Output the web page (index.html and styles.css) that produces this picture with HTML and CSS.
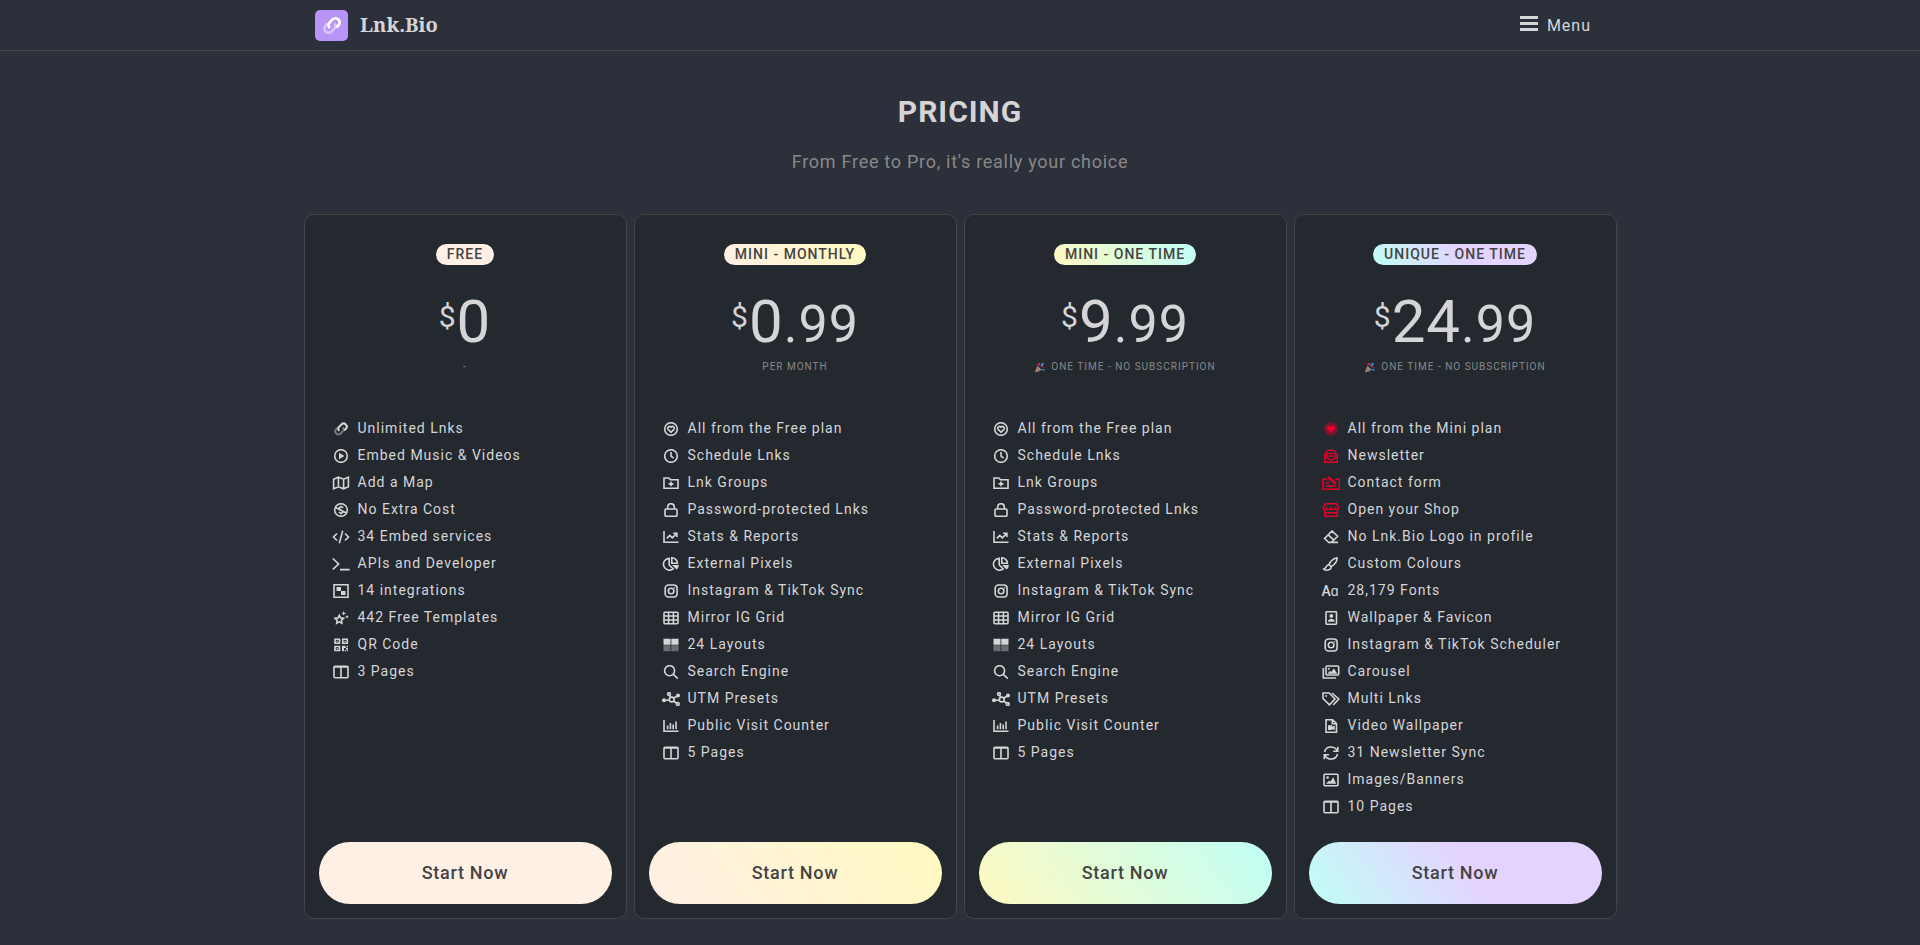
FILE: index.html
```
<!DOCTYPE html>
<html lang="en">
<head>
    <meta charset="UTF-8">
    <meta name="viewport" content="width=device-width, initial-scale=1.0">
    <title>Lnk.Bio - Pricing</title>
    <link rel="stylesheet" href="styles.css">
</head>
<body>
    <!-- Icon set -->
    <svg class="sprite" aria-hidden="true">
        <symbol id="i-link" viewBox="0 0 18 14"><path d="M10.700 5.100A3 3 0 0 1 10.800 9.300L8.600 11.500A3.100 3.100 0 0 1 4.200 7.100L5.800 5.500" stroke-width="2" opacity=".45"/><path d="M7.300 8.900A3 3 0 0 1 7.200 4.700L9.400 2.500A3.100 3.100 0 0 1 13.800 6.900L12.200 8.500" stroke-width="2"/></symbol>
        <symbol id="i-play" viewBox="0 0 18 14"><circle cx="9" cy="7" r="6.300"/><path class="fill" d="M7 3.800v6.400L12.400 7z"/></symbol>
        <symbol id="i-map" viewBox="0 0 18 14"><path d="m1.600 3.200 4.800-2 5.200 2 4.800-2v9.600l-4.800 2-5.200-2-4.800 2zM6.400 1.200v9.600M11.600 3.200v9.600"/></symbol>
        <symbol id="i-nocost" viewBox="0 0 18 14"><circle cx="9" cy="7" r="6.300"/><path d="m3.500 4.500 11 5.500M11.300 4.800c-1-1-4-1.100-4.300.4C6.700 7 11.400 6.800 11 8.900c-.3 1.500-3 1.300-4.200.3M9 2.700v1.200M9 10v1.400"/></symbol>
        <symbol id="i-code" viewBox="0 0 18 14"><path d="M5 3.500 1.500 7 5 10.500M13 3.500 16.500 7 13 10.500M10.700.8 7.300 13.200"/></symbol>
        <symbol id="i-terminal" viewBox="0 0 18 14"><path d="M.8 1.500 6.600 7 .8 12.300M8 12.600h9.700"/></symbol>
        <symbol id="i-integration" viewBox="0 0 18 14"><path d="M2 .7h14v12.600H2z"/><path class="fill" d="M4.500 3H9v4H4.500zM9 7h4.500v4H9z"/></symbol>
        <symbol id="i-stars" viewBox="0 0 18 14"><path d="m7.300 4.300 1.300 2.600 2.900.4-2.100 2 .5 2.900-2.600-1.400-2.600 1.400.5-2.900-2.100-2 2.900-.4z"/><path class="fill" d="m11.700 0 .7 1.700 1.700.7-1.700.7-.7 1.700-.7-1.700-1.700-.7 1.700-.7zM15 4l.6 1.200 1.300.6-1.300.6L15 7.600l-.6-1.200-1.300-.6 1.300-.6z"/></symbol>
        <symbol id="i-qr" viewBox="0 0 18 14"><path d="M3 1.200h4.500v4H3zM10.800 1.200h4.500v4h-4.500zM3 8.500h4.500v4H3z"/><path class="fill" d="M4.700 2.700h1.200v1.200H4.700zM12.500 2.700h1.200v1.200h-1.200zM4.700 10h1.200v1.200H4.700zM10 7.800h3l1 2h2v1.800h-2V10h-2v3.200h-2zM14.500 7.800H16V9h-1.500zM12.700 11.800h1.200v1.400h-1.200zM14.800 12H16v1.200h-1.200z"/></symbol>
        <symbol id="i-columns" viewBox="0 0 18 14"><rect x="2" y="1.200" width="14" height="11.600" rx="1"/><path d="M9 1.500v11M2 2h14"/></symbol>
        <symbol id="i-heart" viewBox="0 0 18 14"><circle cx="9" cy="7" r="6.300"/><path d="M9 10.300 6.100 7.400C4.700 5.500 7 3.300 9 5.300c2-2 4.300.2 2.900 2.100z"/></symbol>
        <symbol id="i-heart-solid" viewBox="0 0 18 14"><circle class="fill" cx="9" cy="7" r="7" opacity=".4"/><path class="fill" d="M9 11.300 5.400 7.600C3.200 5 6.500 1.900 9 4.500c2.500-2.600 5.800.5 3.600 3.100z"/></symbol>
        <symbol id="i-clock" viewBox="0 0 18 14"><circle cx="9" cy="7" r="6.300"/><path d="M9 3v4.200l2.600 1.900"/></symbol>
        <symbol id="i-folder" viewBox="0 0 18 14"><path d="M2 2h4.700l1.800 1.700H16v8.600H2zM9 5.500v4.800M6.600 7.900h4.800"/></symbol>
        <symbol id="i-lock" viewBox="0 0 18 14"><rect x="3" y="6" width="12" height="7.300" rx="1"/><path d="M5.700 6V4a3.300 3.300 0 0 1 6.600 0v2"/></symbol>
        <symbol id="i-stats" viewBox="0 0 18 14"><path d="M2 1v11.300h14.500M4.800 8.400l3-3 2.500 2.500 4-4M11.200 3.200h3.700v3.700"/></symbol>
        <symbol id="i-pie" viewBox="0 0 18 14"><path d="M7.200 1.200a6 6 0 1 0 4 10.700L7.200 8zM9.800.8v5.500h5.600A5.700 5.700 0 0 0 9.800.8z"/><path class="fill" d="M10 8h7a7 7 0 0 1-2.400 4.600z"/></symbol>
        <symbol id="i-instagram" viewBox="0 0 18 14"><rect x="3.200" y="1" width="11.900" height="12" rx="3.300"/><circle cx="9.100" cy="7" r="2.800"/><circle class="fill" cx="12.500" cy="3.700" r=".8"/></symbol>
        <symbol id="i-grid" viewBox="0 0 18 14"><rect x="2" y="1.200" width="14" height="11.600" rx="1"/><path d="M6.600 1.200v11.600M11.400 1.200v11.600M2 5h14M2 9h14"/></symbol>
        <symbol id="i-layout" viewBox="0 0 18 14"><path class="fill" d="M1.500.7h7v6h-7zM9.300.7h7.200v6H9.300z"/><path class="fill" opacity=".4" d="M1.500 7.300h7v6h-7zM9.300 7.300h7.200v6H9.300z"/></symbol>
        <symbol id="i-search" viewBox="0 0 18 14"><circle cx="7.600" cy="5.700" r="5"/><path d="m11.300 9.300 4.500 4.300"/></symbol>
        <symbol id="i-nodes" viewBox="0 0 18 14"><circle cx="9.700" cy="7.500" r="2.400"/><path d="m8.500 5.300-1-2.300M2 8.200h5.200M11.600 6.300 15.300 4M11.500 9l3.500 2.500"/><circle class="fill" cx="2" cy="8.200" r="2"/><circle cx="7" cy="2" r="1.400"/><circle class="fill" cx="16" cy="3.500" r="2"/><circle cx="15.800" cy="12" r="1.400"/></symbol>
        <symbol id="i-chart" viewBox="0 0 18 14"><path d="M2 1v11.300h14.500M5.600 10.200V6.500M8.400 10.200V4M11.200 10.200V5.500M14 10.200V2.500"/></symbol>
        <symbol id="i-newsletter" viewBox="0 0 18 14"><path d="M2.700 5.500v7.800h12.600V5.500M2.400 7.600 9 11.300l6.600-3.700M4.700 8V2.200L9 .7l4.300 1.500V8M2.500 6 4.700 3.800M15.500 6l-2.200-2.200M6.500 4.500h5M6.500 7h5" stroke-width="1.400"/></symbol>
        <symbol id="i-form" viewBox="0 0 18 14"><path d="M4.500 3.200H.9v10h16.500v-10h-4M3.600 6.800h3.600M3.600 10h10.800"/><path d="m6 1.200 7.800 6.200" stroke-width="2.600"/></symbol>
        <symbol id="i-shop" viewBox="0 0 18 14"><path d="M3.500.8h11l2.300 3.700c0 2.500-3 2.500-3.900.6-.8 1.800-3.200 1.800-3.900 0-.8 1.800-3.200 1.800-4 0-.9 1.900-3.800 1.900-3.800-.6zM2.800 6.500v6.700h12.400V6.500M3 9.800h12" stroke-width="1.500"/></symbol>
        <symbol id="i-eraser" viewBox="0 0 18 14"><path d="M6.500 12.300 2.600 8.500 10 1l5.600 5.200-6 6.100zM6.300 4.800l5.500 5.300M6 12.400h10"/></symbol>
        <symbol id="i-brush" viewBox="0 0 18 14"><path d="M6.800 7.700C8.200 4.500 11.500 1.700 15 .8c.3 3-2.500 6.700-5.700 8.900M6.800 7.700c-3.200.2-2.200 3.500-5 4.400 1.500 1.600 7.200 1.800 7.500-2.400zM6.800 7.700l2.500 2"/></symbol>
        <symbol id="i-portrait" viewBox="0 0 18 14"><rect x="4" y=".7" width="10.500" height="12.600" rx="1"/><circle class="fill" cx="9.300" cy="4.900" r="1.900"/><path class="fill" d="M5.900 10.800c0-4 6.800-4 6.800 0z"/></symbol>
        <symbol id="i-carousel" viewBox="0 0 18 14"><rect x="4" y="1" width="12.700" height="9" rx="1"/><path d="M1.300 3v10h12.800"/><path class="fill" d="m5.500 8.700 2.300-3 1.300 1.200 2.800-3.400 3.400 5.200z"/><circle class="fill" cx="6.800" cy="3.700" r="1"/></symbol>
        <symbol id="i-tags" viewBox="0 0 18 14"><path d="M1 1h6.200L13 7l-5.600 5.800L1 6.500zM10 1l6.800 6-5.600 6"/><circle class="fill" cx="4.200" cy="4" r="1"/></symbol>
        <symbol id="i-video" viewBox="0 0 18 14"><path d="M4 .7h6.500l4 3.800v8.800H4zM10.300.8v4h4"/><path class="fill" d="M6 6.200h4.200v1.600l2.500-1.200v4.600l-2.500-1.200v1H6z"/></symbol>
        <symbol id="i-sync" viewBox="0 0 18 14"><path d="M2.600 6C3.700.3 11.500-1 15.300 4.500M15.800.7v4.500h-4.600M15.500 8C14.400 13.700 6.600 15 2.800 9.500M2.300 13.300V8.800h4.600"/></symbol>
        <symbol id="i-image" viewBox="0 0 18 14"><rect x="2" y="1.200" width="14" height="11.600" rx="1"/><path class="fill" d="M4 10.800 7 7.500l1.300 1.200 2.900-4.400 3 6.500z"/><circle class="fill" cx="5.600" cy="4.500" r="1.300"/></symbol>
        <symbol id="i-party" viewBox="0 0 12 12"><path fill="#b09078" d="M1 11.500 3.700 4l4.500 4.400z"/><path fill="#8f7a78" d="m3.700 4 2.500 6-1.800.7-1.800-4z"/><path fill="#d31f5b" d="M4.500 1h2.300v2.800H4.500zM7.500 4.500l2-1.300.8 1.300-2 1.500z"/><path fill="#2492d1" d="M8.600 1h2v1.800l-2.400 2-1-1zM8.500 7.500l3 .5v1.500L8 9z"/><path fill="#b31f45" d="M3 2.200h1.400v1.300H3zM10 5.800h1.500v1.100H10z"/></symbol>
    </svg>

    <header class="topbar">
        <div class="topbar-inner">
            <a class="brand" href="#">
                <span class="brand-logo"><svg class="icon"><use href="#i-link"/></svg></span>
                <span class="brand-name">Lnk.Bio</span>
            </a>
            <button class="menu-btn" type="button"><span class="bars"></span>Menu</button>
        </div>
    </header>

    <main class="container">
        <h1>Pricing</h1>
        <p class="subtitle">From Free to Pro, it's really your choice</p>

        <div class="plans">
            <section class="card free">
                <h2 class="badge">Free</h2>
                <div class="price"><sup>$</sup>0</div>
                <p class="period">-</p>
                <ul class="features">
                    <li><svg class="icon"><use href="#i-link"/></svg>Unlimited Lnks</li>
                    <li><svg class="icon"><use href="#i-play"/></svg>Embed Music &amp; Videos</li>
                    <li><svg class="icon"><use href="#i-map"/></svg>Add a Map</li>
                    <li><svg class="icon"><use href="#i-nocost"/></svg>No Extra Cost</li>
                    <li><svg class="icon"><use href="#i-code"/></svg>34 Embed services</li>
                    <li><svg class="icon"><use href="#i-terminal"/></svg>APIs and Developer</li>
                    <li><svg class="icon"><use href="#i-integration"/></svg>14 integrations</li>
                    <li><svg class="icon"><use href="#i-stars"/></svg>442 Free Templates</li>
                    <li><svg class="icon"><use href="#i-qr"/></svg>QR Code</li>
                    <li><svg class="icon"><use href="#i-columns"/></svg>3 Pages</li>
                </ul>
                <a class="start" href="#">Start Now</a>
            </section>

            <section class="card monthly">
                <h2 class="badge">Mini - Monthly</h2>
                <div class="price"><sup>$</sup>0<small>.99</small></div>
                <p class="period">Per month</p>
                <ul class="features">
                    <li><svg class="icon"><use href="#i-heart"/></svg>All from the Free plan</li>
                    <li><svg class="icon"><use href="#i-clock"/></svg>Schedule Lnks</li>
                    <li><svg class="icon"><use href="#i-folder"/></svg>Lnk Groups</li>
                    <li><svg class="icon"><use href="#i-lock"/></svg>Password-protected Lnks</li>
                    <li><svg class="icon"><use href="#i-stats"/></svg>Stats &amp; Reports</li>
                    <li><svg class="icon"><use href="#i-pie"/></svg>External Pixels</li>
                    <li><svg class="icon"><use href="#i-instagram"/></svg>Instagram &amp; TikTok Sync</li>
                    <li><svg class="icon"><use href="#i-grid"/></svg>Mirror IG Grid</li>
                    <li><svg class="icon"><use href="#i-layout"/></svg>24 Layouts</li>
                    <li><svg class="icon"><use href="#i-search"/></svg>Search Engine</li>
                    <li><svg class="icon"><use href="#i-nodes"/></svg>UTM Presets</li>
                    <li><svg class="icon"><use href="#i-chart"/></svg>Public Visit Counter</li>
                    <li><svg class="icon"><use href="#i-columns"/></svg>5 Pages</li>
                </ul>
                <a class="start" href="#">Start Now</a>
            </section>

            <section class="card onetime">
                <h2 class="badge">Mini - One time</h2>
                <div class="price"><sup>$</sup>9<small>.99</small></div>
                <p class="period"><svg class="party"><use href="#i-party"/></svg>One time - No subscription</p>
                <ul class="features">
                    <li><svg class="icon"><use href="#i-heart"/></svg>All from the Free plan</li>
                    <li><svg class="icon"><use href="#i-clock"/></svg>Schedule Lnks</li>
                    <li><svg class="icon"><use href="#i-folder"/></svg>Lnk Groups</li>
                    <li><svg class="icon"><use href="#i-lock"/></svg>Password-protected Lnks</li>
                    <li><svg class="icon"><use href="#i-stats"/></svg>Stats &amp; Reports</li>
                    <li><svg class="icon"><use href="#i-pie"/></svg>External Pixels</li>
                    <li><svg class="icon"><use href="#i-instagram"/></svg>Instagram &amp; TikTok Sync</li>
                    <li><svg class="icon"><use href="#i-grid"/></svg>Mirror IG Grid</li>
                    <li><svg class="icon"><use href="#i-layout"/></svg>24 Layouts</li>
                    <li><svg class="icon"><use href="#i-search"/></svg>Search Engine</li>
                    <li><svg class="icon"><use href="#i-nodes"/></svg>UTM Presets</li>
                    <li><svg class="icon"><use href="#i-chart"/></svg>Public Visit Counter</li>
                    <li><svg class="icon"><use href="#i-columns"/></svg>5 Pages</li>
                </ul>
                <a class="start" href="#">Start Now</a>
            </section>

            <section class="card unique">
                <h2 class="badge">Unique - One time</h2>
                <div class="price"><sup>$</sup>24<small>.99</small></div>
                <p class="period"><svg class="party"><use href="#i-party"/></svg>One time - No subscription</p>
                <ul class="features">
                    <li><svg class="icon red"><use href="#i-heart-solid"/></svg>All from the Mini plan</li>
                    <li><svg class="icon red"><use href="#i-newsletter"/></svg>Newsletter</li>
                    <li><svg class="icon red"><use href="#i-form"/></svg>Contact form</li>
                    <li><svg class="icon red"><use href="#i-shop"/></svg>Open your Shop</li>
                    <li><svg class="icon"><use href="#i-eraser"/></svg>No Lnk.Bio Logo in profile</li>
                    <li><svg class="icon"><use href="#i-brush"/></svg>Custom Colours</li>
                    <li><span class="icon aa">Aɑ</span>28,179 Fonts</li>
                    <li><svg class="icon"><use href="#i-portrait"/></svg>Wallpaper &amp; Favicon</li>
                    <li><svg class="icon"><use href="#i-instagram"/></svg>Instagram &amp; TikTok Scheduler</li>
                    <li><svg class="icon"><use href="#i-carousel"/></svg>Carousel</li>
                    <li><svg class="icon"><use href="#i-tags"/></svg>Multi Lnks</li>
                    <li><svg class="icon"><use href="#i-video"/></svg>Video Wallpaper</li>
                    <li><svg class="icon"><use href="#i-sync"/></svg>31 Newsletter Sync</li>
                    <li><svg class="icon"><use href="#i-image"/></svg>Images/Banners</li>
                    <li><svg class="icon"><use href="#i-columns"/></svg>10 Pages</li>
                </ul>
                <a class="start" href="#">Start Now</a>
            </section>
        </div>
    </main>
</body>
</html>
```
FILE: styles.css
```
:root {
    --bg: #2c303a;
    --card-bg: #24282f;
    --border: #444;
    --text: #d5d5d7;
    --muted: #888;
    --dark: #444;
    --red: #e4002b;
}

* {
    box-sizing: border-box;
}

body {
    font-family: Roboto, sans-serif;
    font-size: 14px;
    letter-spacing: 1px;
    background: var(--bg);
    color: var(--text);
    margin: 0;
}

a {
    color: inherit;
    text-decoration: none;
}

.sprite {
    display: none;
}

.topbar {
    border-bottom: 1px solid var(--border);
}

.topbar-inner {
    max-width: 1290px;
    height: 50px;
    margin: 0 auto;
    display: flex;
    justify-content: space-between;
    align-items: center;
}

.brand {
    display: flex;
    align-items: center;
    gap: 12px;
}

.brand-logo {
    display: flex;
    align-items: center;
    justify-content: center;
    width: 33px;
    height: 31px;
    border-radius: 5px;
    background: #b794f6;
    color: #fff;
}

.brand-logo .icon {
    width: 24px;
    height: 19px;
}

.brand-name {
    font-family: "Noto Serif", "Liberation Serif", serif;
    font-size: 20px;
    font-weight: bold;
    line-height: 28px;
    letter-spacing: 0;
}

.menu-btn {
    display: flex;
    align-items: center;
    gap: 9px;
    padding: 0 14px;
    border: none;
    background: none;
    color: inherit;
    font: inherit;
    font-size: 16px;
    letter-spacing: 1px;
    cursor: pointer;
}

.bars {
    width: 18px;
    height: 15px;
    margin-bottom: 4px;
    border-top: 3px solid;
    border-bottom: 3px solid;
    display: flex;
    align-items: center;
}

.bars::before {
    content: "";
    width: 100%;
    height: 3px;
    background: currentColor;
}

.container {
    max-width: 1313px;
    margin: 0 auto;
    padding-bottom: 26px;
}

h1 {
    margin: 43px 0 0;
    font-size: 30px;
    line-height: 36px;
    text-align: center;
    text-transform: uppercase;
}

.subtitle {
    margin: 20px 0 40px;
    font-size: 18px;
    line-height: 24px;
    letter-spacing: 0.04em;
    color: var(--muted);
    text-align: center;
}

.plans {
    display: grid;
    grid-template-columns: repeat(4, 1fr);
    gap: 7px;
}

.card {
    display: flex;
    flex-direction: column;
    align-items: center;
    padding: 29px 14px 14px;
    border: 1px solid var(--border);
    border-radius: 10px;
    background: var(--card-bg);
}

.badge {
    margin: 0;
    padding: 0 11px;
    border-radius: 11px;
    color: var(--dark);
    font-size: 14px;
    font-weight: 500;
    line-height: 21px;
    text-transform: uppercase;
}

.price {
    margin-top: 27px;
    font-size: 60px;
    line-height: 60px;
}

.price sup {
    font-size: 30px;
    line-height: 0;
    vertical-align: 15px;
}

.price small {
    font-size: 52px;
    line-height: 0;
}

.period {
    display: flex;
    align-items: center;
    gap: 6px;
    margin: 9px 0 0;
    font-size: 10px;
    line-height: 12px;
    color: var(--muted);
    text-transform: uppercase;
}

.party {
    width: 11px;
    height: 11px;
}

.features {
    align-self: stretch;
    flex: 1;
    margin: 42px 0 22px;
    padding: 0 13px;
    list-style: none;
}

.features li {
    display: flex;
    align-items: center;
    gap: 8px;
    line-height: 27px;
}

.icon {
    flex: none;
    width: 18px;
    height: 14px;
    overflow: visible;
    fill: none;
    stroke: currentColor;
    stroke-width: 1.6;
}

.fill {
    fill: currentColor;
    stroke: none;
}

.red {
    color: var(--red);
}

.aa {
    line-height: 14px;
    letter-spacing: 0;
    font-weight: 500;
}

.start {
    align-self: stretch;
    border-radius: 31px;
    color: var(--dark);
    font-size: 18px;
    font-weight: 500;
    line-height: 62px;
    letter-spacing: 0.04em;
    text-align: center;
}

.free .badge,
.free .start {
    background: #fff0e5;
}

.monthly .badge,
.monthly .start {
    background: linear-gradient(55deg, #fff0e5, #fff9c0);
}

.onetime .badge,
.onetime .start {
    background: linear-gradient(55deg, #fff9c0, #c0fff6);
}

.unique .badge,
.unique .start {
    background: linear-gradient(55deg, #c0fff6, #e4d3ff 55%);
}
```
